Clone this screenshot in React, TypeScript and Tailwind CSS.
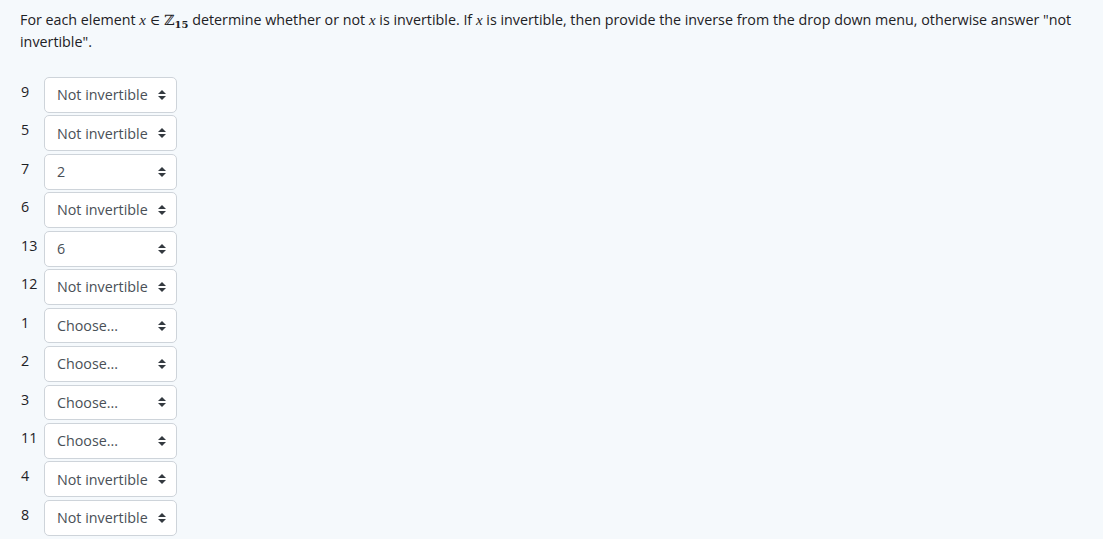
import React from "react";

const rows: { n: string; v: string }[] = [
  { n: "9", v: "Not invertible" },
  { n: "5", v: "Not invertible" },
  { n: "7", v: "2" },
  { n: "6", v: "Not invertible" },
  { n: "13", v: "6" },
  { n: "12", v: "Not invertible" },
  { n: "1", v: "Choose..." },
  { n: "2", v: "Choose..." },
  { n: "3", v: "Choose..." },
  { n: "11", v: "Choose..." },
  { n: "4", v: "Not invertible" },
  { n: "8", v: "Not invertible" },
];

const options = ["Choose...", "Not invertible", "1", "2", "3", "4", "5", "6", "7", "8", "9", "10", "11", "12", "13", "14"];

function Arrows() {
  return (
    <svg viewBox="0 0 4 5" className="absolute right-[11px] top-1/2 -translate-y-1/2 w-[8px] h-[10px] pointer-events-none">
      <path d="M2 0L0 2h4zm0 5L0 3h4z" fill="#343a40" />
    </svg>
  );
}

function MathX() {
  return (
    <span className="italic text-[15px] leading-[0]" style={{ fontFamily: "'Liberation Serif', serif" }}>
      x
    </span>
  );
}

export default function App() {
  return (
    <div className="min-h-screen bg-[#f5f9fc] text-[#1d2125] px-[20px] pt-[9px]" style={{ fontFamily: "'Open Sans', sans-serif" }}>
      <p className="text-[14.3px] leading-[22px] mb-[24px]">
        For each element <MathX />{" "}
        <span className="leading-[0]" style={{ fontFamily: "'DejaVu Serif', serif" }}>∈</span>{" "}
        <span className="leading-[0]" style={{ fontFamily: "'DejaVu Serif', serif" }}>
          ℤ<span className="font-bold text-[10px] relative top-[3px] leading-[0]">15</span>
        </span>{" "}
        determine whether or not <MathX /> is invertible. If <MathX /> is invertible, then provide the inverse from the drop down menu, otherwise answer "not invertible".
      </p>

      <div className="flex flex-col">
        {rows.map((r, i) => (
          <div key={i} className="flex items-start mb-[2.7px]">
            <label className="w-[24px] pt-[4px] text-[14.3px] leading-[22px] pl-[1px]">{r.n}</label>
            <div className="relative">
              <select
                defaultValue={r.v}
                className="appearance-none w-[133px] h-[35.75px] bg-white border border-[#ced4da] rounded-[5px] pl-[12px] pr-[28px] text-[14.3px] text-[#495057] outline-none"
                style={{ fontFamily: "'Open Sans', sans-serif" }}
              >
                {options.map((o) => (
                  <option key={o} value={o}>
                    {o}
                  </option>
                ))}
              </select>
              <Arrows />
            </div>
          </div>
        ))}
      </div>
    </div>
  );
}
